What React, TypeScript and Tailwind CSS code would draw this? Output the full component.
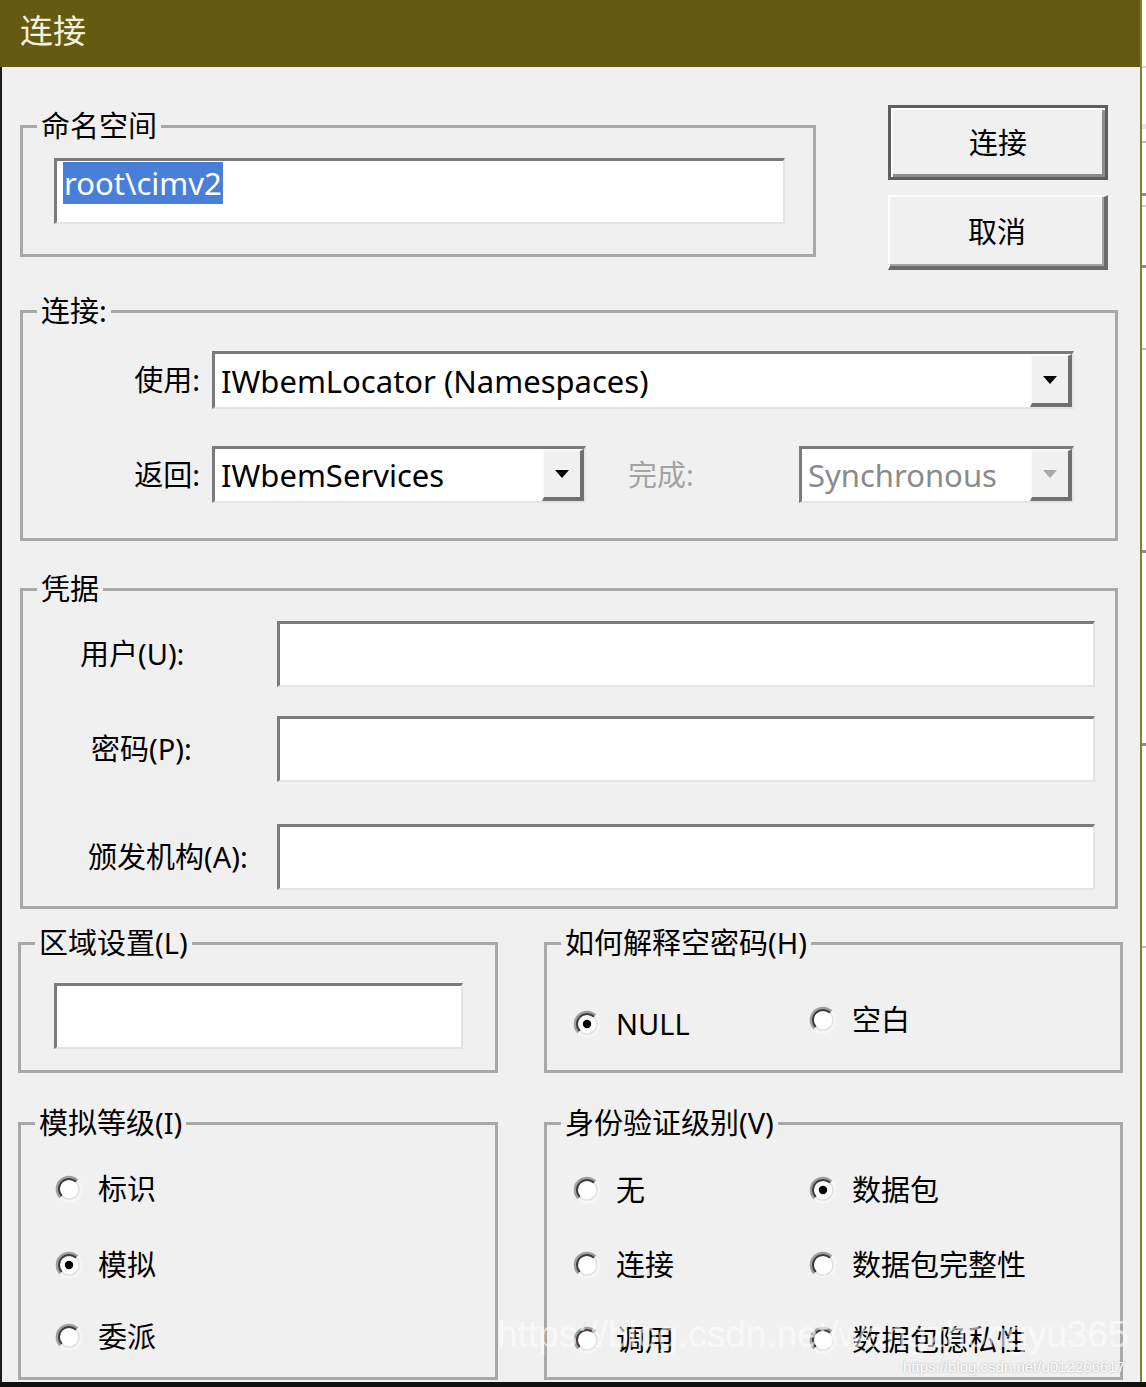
import React from 'react';

type Kids = { children?: React.ReactNode; className?: string };

function Group({ title, className = '', children }: Kids & { title: string }) {
    return (
        <fieldset className={`border-[3px] border-[#a8a8a8] ${className}`}>
            <legend className="ml-[14px] px-[4px] text-[29px] leading-[28px] text-black">{title}</legend>
            {children}
        </fieldset>
    );
}

// sunken white edit box
function Edit({ className = '', children }: Kids) {
    return (
        <div className={`bg-white border-t-[3px] border-l-[3px] border-t-[#7b7b7b] border-l-[#7b7b7b] border-b-2 border-r-2 border-b-[#e4e4e4] border-r-[#e4e4e4] ${className}`}>
            {children}
        </div>
    );
}

function Combo({ text, disabled, className = '' }: { text: string; disabled?: boolean; className?: string }) {
    return (
        <div className={`flex bg-white border-t-[3px] border-l-[3px] border-t-[#7b7b7b] border-l-[#7b7b7b] border-b-2 border-r-2 border-b-[#e4e4e4] border-r-[#e4e4e4] ${className}`}>
            <div className={`flex-1 pl-[6px] flex items-center text-[31px] leading-[36px] ${disabled ? 'text-[#8a8a8a]' : 'text-black'}`}>
                {text}
            </div>
            <div className="w-[42px] h-full flex items-center justify-center bg-[#f0f0f0] border-t-2 border-l-2 border-t-[#fbfbfb] border-l-[#fbfbfb] border-b-[4px] border-r-[4px] border-b-[#707070] border-r-[#707070]">
                <svg width="14" height="8" viewBox="0 0 14 8">
                    <path d="M0 0 H14 L7 8 Z" fill={disabled ? '#a8a8a8' : '#000'} />
                </svg>
            </div>
        </div>
    );
}

function Radio({ label, checked, className = '' }: { label: string; checked?: boolean; className?: string }) {
    return (
        <div className={`flex items-center gap-[15px] ${className}`}>
            <svg width="28" height="28" viewBox="0 0 28 28" className="shrink-0">
                <circle cx="14" cy="14" r="12" fill="#fff" />
                <path d="M5.5 22.5 A12 12 0 0 1 22.5 5.5" stroke="#a0a0a0" strokeWidth="2.6" fill="none" />
                <path d="M6.9 21.1 A10 10 0 0 1 21.1 6.9" stroke="#3c3c3c" strokeWidth="2" fill="none" />
                <path d="M22.5 5.5 A12 12 0 0 1 5.5 22.5" stroke="#f6f6f6" strokeWidth="2.6" fill="none" />
                <path d="M21.1 6.9 A10 10 0 0 1 6.9 21.1" stroke="#e2e2e2" strokeWidth="1.6" fill="none" />
                {checked && <circle cx="14" cy="14" r="4.2" fill="#000" />}
            </svg>
            <span className="text-[29px] leading-[30px] text-black">{label}</span>
        </div>
    );
}

export default function App() {
    return (
        <div className="relative flex w-[1146px] h-[1387px] bg-[#111] overflow-hidden font-['Noto_Sans','Noto_Sans_CJK_SC',sans-serif]">
            <div className="flex flex-col w-[1140px] h-[1382px]">
                <div className="h-[67px] bg-[#645a12] flex items-center pl-[20px] pb-[6px]">
                    <span className="text-[33px] leading-[36px] text-[#f3efd9]">连接</span>
                </div>

                <div className="flex-1 flex flex-col bg-[#f0f0f0] border-l-2 border-[#1c1c1c]">
                    {/* namespace + buttons */}
                    <div className="flex items-start mt-[38px]">
                        <Group title="命名空间" className="mt-[7px] ml-[18px] w-[796px] h-[145px]">
                            <Edit className="mt-[18px] ml-[31px] w-[731px] h-[66px]">
                                <span className="inline-block mt-[1px] ml-[6px] px-[1px] h-[42px] leading-[42px] text-[31px] bg-[#4a7fd9] text-white">
                                    root\cimv2
                                </span>
                            </Edit>
                        </Group>
                        <div className="ml-[72px] flex flex-col gap-[15px] w-[220px]">
                            <button className="h-[75px] bg-[#f0f0f0] border-[3px] border-[#5e5e5e] shadow-[inset_2px_2px_0_#ffffff,inset_-3px_-3px_0_#8c8c8c] text-[29px] text-black">
                                连接
                            </button>
                            <button className="h-[75px] bg-[#f0f0f0] border-t-2 border-l-2 border-t-[#fdfdfd] border-l-[#fdfdfd] border-b-[4px] border-r-[4px] border-b-[#6a6a6a] border-r-[#6a6a6a] shadow-[inset_-2px_-2px_0_#a3a3a3] text-[29px] text-black">
                                取消
                            </button>
                        </div>
                    </div>

                    {/* connection */}
                    <Group title="连接:" className="mt-[27px] ml-[18px] w-[1098px] h-[244px]">
                        <div className="flex flex-col">
                            <div className="mt-[26px] flex items-center h-[58px]">
                                <div className="w-[177px] text-right text-[29px] leading-[30px]">使用:</div>
                                <Combo text="IWbemLocator (Namespaces)" className="ml-[12px] w-[862px] h-[58px]" />
                            </div>
                            <div className="mt-[37px] flex items-center h-[57px]">
                                <div className="w-[177px] text-right text-[29px] leading-[30px]">返回:</div>
                                <Combo text="IWbemServices" className="ml-[12px] w-[374px] h-[57px]" />
                                <div className="ml-[42px] w-[171px] text-[29px] leading-[30px] text-[#a3a3a3]">完成:</div>
                                <Combo text="Synchronous" disabled className="w-[275px] h-[57px]" />
                            </div>
                        </div>
                    </Group>

                    {/* credentials */}
                    <Group title="凭据" className="mt-[34px] ml-[18px] w-[1098px] h-[334px]">
                        <div className="flex flex-col">
                            <div className="mt-[18px] flex items-center">
                                <div className="w-[254px] pl-[57px] text-[29px] leading-[30px]">用户(U):</div>
                                <Edit className="w-[818px] h-[66px]" />
                            </div>
                            <div className="mt-[29px] flex items-center">
                                <div className="w-[254px] pl-[68px] text-[29px] leading-[30px]">密码(P):</div>
                                <Edit className="w-[818px] h-[66px]" />
                            </div>
                            <div className="mt-[42px] flex items-center">
                                <div className="w-[254px] pl-[65px] text-[29px] leading-[30px]">颁发机构(A):</div>
                                <Edit className="w-[818px] h-[66px]" />
                            </div>
                        </div>
                    </Group>

                    {/* locale + blank password */}
                    <div className="flex items-start mt-[20px]">
                        <Group title="区域设置(L)" className="ml-[16px] w-[480px] h-[144px]">
                            <Edit className="mt-[26px] ml-[33px] w-[409px] h-[66px]" />
                        </Group>
                        <Group title="如何解释空密码(H)" className="ml-[46px] w-[579px] h-[144px]">
                            <div className="flex items-start">
                                <Radio label="NULL" checked className="mt-[52px] ml-[26px] w-[236px]" />
                                <Radio label="空白" className="mt-[48px]" />
                            </div>
                        </Group>
                    </div>

                    {/* impersonation + authentication */}
                    <div className="flex items-start mt-[36px]">
                        <Group title="模拟等级(I)" className="ml-[16px] w-[480px] h-[271px]">
                            <div className="flex flex-col pl-[34px]">
                                <Radio label="标识" className="mt-[37px]" />
                                <Radio label="模拟" checked className="mt-[46px]" />
                                <Radio label="委派" className="mt-[42px]" />
                            </div>
                        </Group>
                        <Group title="身份验证级别(V)" className="ml-[46px] w-[579px] h-[271px]">
                            <div className="flex flex-col">
                                <div className="flex mt-[38px]">
                                    <Radio label="无" className="ml-[26px] w-[236px]" />
                                    <Radio label="数据包" checked />
                                </div>
                                <div className="flex mt-[45px]">
                                    <Radio label="连接" className="ml-[26px] w-[236px]" />
                                    <Radio label="数据包完整性" />
                                </div>
                                <div className="flex mt-[45px]">
                                    <Radio label="调用" className="ml-[26px] w-[236px]" />
                                    <Radio label="数据包隐私性" />
                                </div>
                            </div>
                        </Group>
                    </div>
                </div>
            </div>

            {/* edge of the window behind */}
            <div className="w-[6px] h-[1382px] flex flex-col bg-white border-l-2 border-[#8a7f2e]">
                <div className="mt-[66px] h-[2px] bg-[#d8d8d8]" />
                <div className="mt-[56px] h-[5px] bg-[#e4e4e4]" />
                <div className="mt-[12px] h-[2px] bg-[#bdbdbd]" />
                <div className="mt-[50px] h-[3px] bg-[#8c8c8c]" />
                <div className="mt-[9px] h-[2px] bg-[#d0d0d0]" />
                <div className="mt-[58px] h-[3px] bg-[#8c8c8c]" />
                <div className="mt-[80px] h-[2px] bg-[#bdbdbd]" />
                <div className="mt-[200px] h-[3px] bg-[#8c8c8c]" />
                <div className="mt-[190px] h-[3px] bg-[#8c8c8c]" />
                <div className="mt-[200px] h-[2px] bg-[#bdbdbd]" />
            </div>

            {/* watermarks */}
            <div className="absolute left-[497px] top-[1313px] text-[37px] leading-[44px] text-white/60 font-['Liberation_Sans',sans-serif] whitespace-nowrap">
                https://blog.csdn.net/wangzhongyu365
            </div>
            <div className="absolute left-[903px] top-[1358px] text-[15px] leading-[18px] text-white font-['Liberation_Sans',sans-serif] whitespace-nowrap [text-shadow:0_0_2px_#9a9a9a]">
                https://blog.csdn.net/u012206617
            </div>
        </div>
    );
}
